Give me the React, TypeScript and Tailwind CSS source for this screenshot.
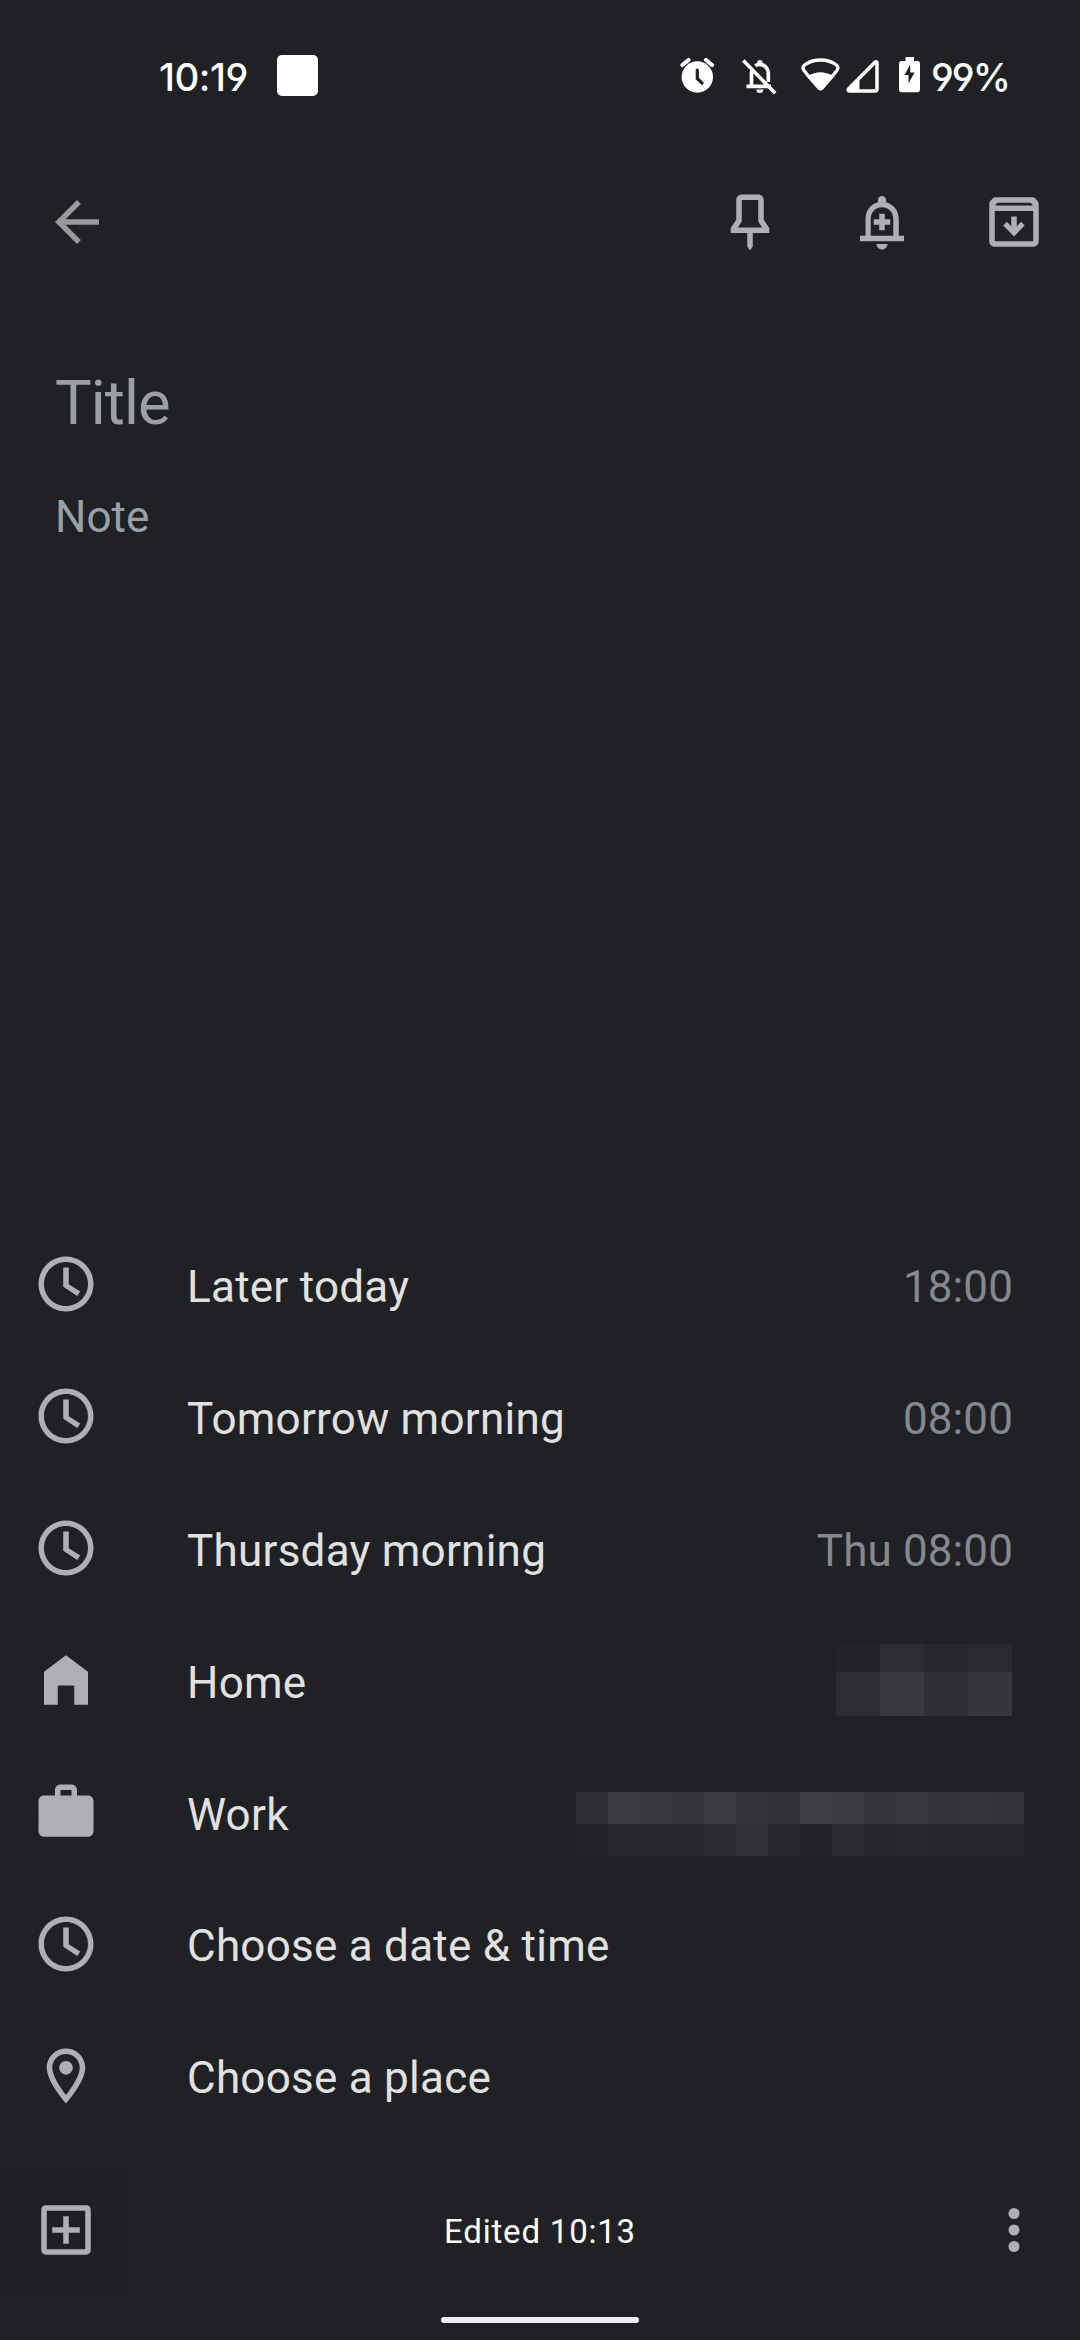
import type { ReactNode } from 'react';

type IconProps = { children: ReactNode; className?: string };

function Icon({ children, className = 'text-[#aeafb4]' }: IconProps) {
  return (
    <svg viewBox="0 0 24 24" fill="currentColor" className={`size-[66px] shrink-0 ${className}`}>
      {children}
    </svg>
  );
}

const ClockIcon = () => (
  <Icon>
    <path d="M11.99 2C6.47 2 2 6.48 2 12s4.47 10 9.99 10C17.52 22 22 17.52 22 12S17.52 2 11.99 2zM12 20c-4.42 0-8-3.58-8-8s3.58-8 8-8 8 3.58 8 8-3.58 8-8 8z" />
    <path d="M11 6h2v6.100l4.200 2.600-1.100 1.700L11 13z" />
  </Icon>
);

const HomeIcon = () => (
  <Icon>
    <path d="M4 21V9l8-6 8 6v12h-5v-7H9v7z" />
  </Icon>
);

const WorkIcon = () => (
  <Icon>
    <path d="M20 6h-4V4c0-1.11-.89-2-2-2h-4c-1.11 0-2 .89-2 2v2H4c-1.11 0-1.99.89-1.99 2L2 19c0 1.11.89 2 2 2h16c1.11 0 2-.89 2-2V8c0-1.11-.89-2-2-2zm-6 0h-4V4h4v2z" />
  </Icon>
);

const PlaceIcon = () => (
  <Icon>
    <path d="M12 2C8.13 2 5 5.13 5 9c0 5.25 7 13 7 13s7-7.75 7-13c0-3.87-3.13-7-7-7zM7 9c0-2.76 2.24-5 5-5s5 2.24 5 5c0 2.88-2.88 7.19-5 9.88C9.92 16.21 7 11.85 7 9z" />
    <circle cx="12" cy="9" r="2.5" />
  </Icon>
);

type Row = { icon: ReactNode; label: string; detail?: ReactNode };

const homeTop = ['bg-[#222327]', 'bg-[#2b2c30]', 'bg-[#27282c]', 'bg-[#292a2e]'];
const homeBottom = ['bg-[#2c2d31]', 'bg-[#38393d]', 'bg-[#2f3034]', 'bg-[#36373b]'];
const workCells = [
  'bg-[#2d2e32]', 'bg-[#3a3b3f]', 'bg-[#37383c]', 'bg-[#353639]', 'bg-[#3b3c40]', 'bg-[#343539]', 'bg-[#303135]',
  'bg-[#3f4044]', 'bg-[#3a3b3e]', 'bg-[#353639]', 'bg-[#37383b]', 'bg-[#333438]', 'bg-[#353639]', 'bg-[#323337]',
  'bg-[#222327]', 'bg-[#27282c]', 'bg-[#28292d]', 'bg-[#28292d]', 'bg-[#292a2e]', 'bg-[#303135]', 'bg-[#27282c]',
  'bg-[#232428]', 'bg-[#2a2b2f]', 'bg-[#26272b]', 'bg-[#27282c]', 'bg-[#26272b]', 'bg-[#25262a]', 'bg-[#26272b]',
];

const HomeMosaic = () => (
  <div className="-mr-[14px] w-[191px]">
    <div className="flex h-[28px]">
      {homeTop.map((c, i) => <div key={i} className={`w-[44px] ${c}`} />)}
      <div className="w-[15px] bg-[#212226]" />
    </div>
    <div className="flex h-[44px]">
      {homeBottom.map((c, i) => <div key={i} className={`w-[44px] ${c}`} />)}
    </div>
  </div>
);

const WorkMosaic = () => (
  <div className="-mr-[11px] grid grid-cols-[repeat(14,32px)] self-start pt-[46px]">
    {workCells.map((c, i) => <div key={i} className={`h-[32px] ${c}`} />)}
  </div>
);

const rows: Row[] = [
  { icon: <ClockIcon />, label: 'Later today', detail: '18:00' },
  { icon: <ClockIcon />, label: 'Tomorrow morning', detail: '08:00' },
  { icon: <ClockIcon />, label: 'Thursday morning', detail: 'Thu 08:00' },
  { icon: <HomeIcon />, label: 'Home', detail: <HomeMosaic /> },
  { icon: <WorkIcon />, label: 'Work', detail: <WorkMosaic /> },
  { icon: <ClockIcon />, label: 'Choose a date & time' },
  { icon: <PlaceIcon />, label: 'Choose a place' },
];

function StatusBar() {
  return (
    <header className="flex h-[150px] items-center px-[72px] font-['Inter',sans-serif] text-[38.500px] font-medium text-white">
      <span className="ml-[87px] mt-[5px] w-[91px] whitespace-nowrap tracking-[-0.5px] [font-feature-settings:'ss01','cv04']">10:19</span>
      <div className="ml-[27px] size-[41px] rounded-[5px] bg-white" />
      <div className="flex-1" />
      <svg viewBox="680 50 242 50" className="h-[50px] w-[242px] shrink-0" fill="white">
        <circle cx="697.3" cy="77" r="15.7" />
        <path d="M682.5 65l6-5M712 65l-6-5" fill="none" stroke="white" strokeWidth="4.2" strokeLinecap="round" />
        <path d="M697.3 70v8.5l4.8 4.6" fill="none" stroke="#202124" strokeWidth="3.2" strokeLinecap="round" />
        <path d="M746.500 86.300H771M751.500 86V73c0-1.500.3-2.700.8-3.900M755.300 65.700c1.200-.8 2.500-1.300 4.200-1.300 5.200 0 8.800 3.900 8.800 9V82" fill="none" stroke="white" strokeWidth="3.700" />
        <path d="M757.300 64.500v-1.800a2.600 2.600 0 0 1 5.200 0v1.800zM756.300 89.500h7a3.500 3.500 0 0 1-7 0z" />
        <path d="M744.500 61.800L774 92" fill="none" stroke="white" strokeWidth="3.500" strokeLinecap="square" />
        <path d="M820.500 60c-6.600 0-12 2-16 5-1.700 1.300-1.900 3.200-.9 4.900l4.900 6.300L819 88.200c.9 1 2.200 1 3 0l10.400-12 4.900-6.300c1-1.700.8-3.600-.9-4.900-4-3-9.300-5-15.900-5z" fill="none" stroke="white" strokeWidth="3.300" />
        <path d="M808.500 75.800c7-4.800 17-4.800 24 0L822 88.200c-.9 1-2.100 1-3 0z" />
        <path d="M875.200 62.100L848.500 89c-.7.800-.4 2 .8 2h26c1 0 1.700-.7 1.700-1.700V62.900c0-1-.9-1.400-1.800-.8z" fill="none" stroke="white" strokeWidth="3.500" />
        <path d="M859.500 79v12H848z" />
        <path fillRule="evenodd" d="M905.500 57h8.500v4h3.600c1.500 0 2.400 1 2.400 2.400v26.200c0 1.500-1 2.700-2.500 2.700h-16c-1.500 0-2.500-1.200-2.500-2.700V63.400c0-1.400 1-2.400 2.400-2.400h4.100zm3 18h-4l5.700-10.500v8h4.300l-6 11z" />
      </svg>
      <span className="ml-[9px] mt-[5px] w-[77px] whitespace-nowrap tracking-[-2px] [font-feature-settings:'ss01','cv04']">99%</span>
    </header>
  );
}

export default function App() {
  return (
    <div className="flex h-[2340px] w-[1080px] flex-col overflow-hidden bg-[#202124] font-['Roboto',sans-serif] text-[44px] tracking-[0.25px]">
      <StatusBar />
      <nav className="flex h-[144px] items-center gap-[66px] px-[33px]">
        <Icon className="ml-[11px] mr-auto text-[#99999b]">
          <path d="M20 11H7.830l5.590-5.590L12 4l-8 8 8 8 1.410-1.410L7.830 13H20v-2z" />
        </Icon>
        <Icon>
          <path fillRule="evenodd" d="M9 2h6c1.100 0 2 .9 2 2v7.200l2 3V16h-6v5l-1 1.300-1-1.300v-5H5v-1.800l2-3V4c0-1.100.9-2 2-2zm0 2v7.800L7.600 14h8.800L15 11.800V4z" />
        </Icon>
        <Icon>
          <path fillRule="evenodd" d="M12 2.500c.8 0 1.500.7 1.500 1.500v.8c2.900.8 4.600 3.200 4.600 6.200v6H20v2H4v-2h2v-6c0-3 1.600-5.400 4.500-6.200V4c0-.8.700-1.500 1.500-1.500zm0 4.100c-2.500 0-4.100 1.900-4.100 4.400v6h8.200v-6c0-2.500-1.600-4.400-4.100-4.400z" />
          <path d="M11 9h2v2h2v2h-2v2h-2v-2H9v-2h2zM10 20h4c0 1.100-.9 2-2 2s-2-.9-2-2z" />
        </Icon>
        <Icon>
          <path fillRule="evenodd" d="M5.300 3h13.400c.5 0 .9.200 1.200.6l.7.800c.3.400.4.700.4 1.100V19c0 1.100-.9 2-2 2H5c-1.100 0-2-.9-2-2V5.500c0-.4.100-.7.400-1.100l.7-.8c.3-.4.700-.6 1.200-.6zM5.900 5l-.8 1h13.800l-.8-1zM5 8v11h14V8z" />
          <path d="M11 10h2v3.500l1.600-1.600 1.300 1.400L12 17.300l-3.900-4 1.300-1.400 1.600 1.600z" />
        </Icon>
      </nav>
      <main className="flex-1 px-[55px] text-[#9aa0a6]">
        <div className="mt-[69px] text-[61.500px] leading-[80px] tracking-[-0.900px]">Title</div>
        <div className="mt-[44px] leading-[60px] tracking-normal">Note</div>
      </main>
      <ul className="flex flex-col">
        {rows.map((row) => (
          <li key={row.label} className="flex h-[132px] items-center pl-[33px] pr-[67px]">
            {row.icon}
            <span className={`ml-[88px] flex-1 text-[#e1e1e1] ${row.detail ? 'mt-[5px]' : 'mt-[3px]'}`}>{row.label}</span>
            {typeof row.detail === 'string' ? (
              <span className="mt-[5px] tracking-[0.100px] text-[#85888d]">{row.detail}</span>
            ) : (
              row.detail
            )}
          </li>
        ))}
      </ul>
      <footer className="mt-[22px] flex h-[132px] items-center justify-between">
        <div className="flex size-[132px] items-center justify-center bg-[#1e2023]">
          <Icon>
            <path fillRule="evenodd" d="M4.700 3h14.600C20.300 3 21 3.700 21 4.700v14.600c0 1-.7 1.700-1.700 1.700H4.700C3.700 21 3 20.300 3 19.300V4.700C3 3.700 3.700 3 4.700 3zM5 5v14h14V5z" />
            <path d="M11 7h2v4h4v2h-4v4h-2v-4H7v-2h4z" />
          </Icon>
        </div>
        <span className="mt-[4px] text-[33px] tracking-[0.800px] text-white">Edited 10:13</span>
        <div className="flex size-[132px] items-center justify-center">
          <Icon>
            <circle cx="12" cy="6" r="2" />
            <circle cx="12" cy="12" r="2" />
            <circle cx="12" cy="18" r="2" />
          </Icon>
        </div>
      </footer>
      <div className="flex h-[44px] justify-center pt-[21px]">
        <div className="h-[6px] w-[198px] rounded-full bg-[#eeeeee]" />
      </div>
    </div>
  );
}
